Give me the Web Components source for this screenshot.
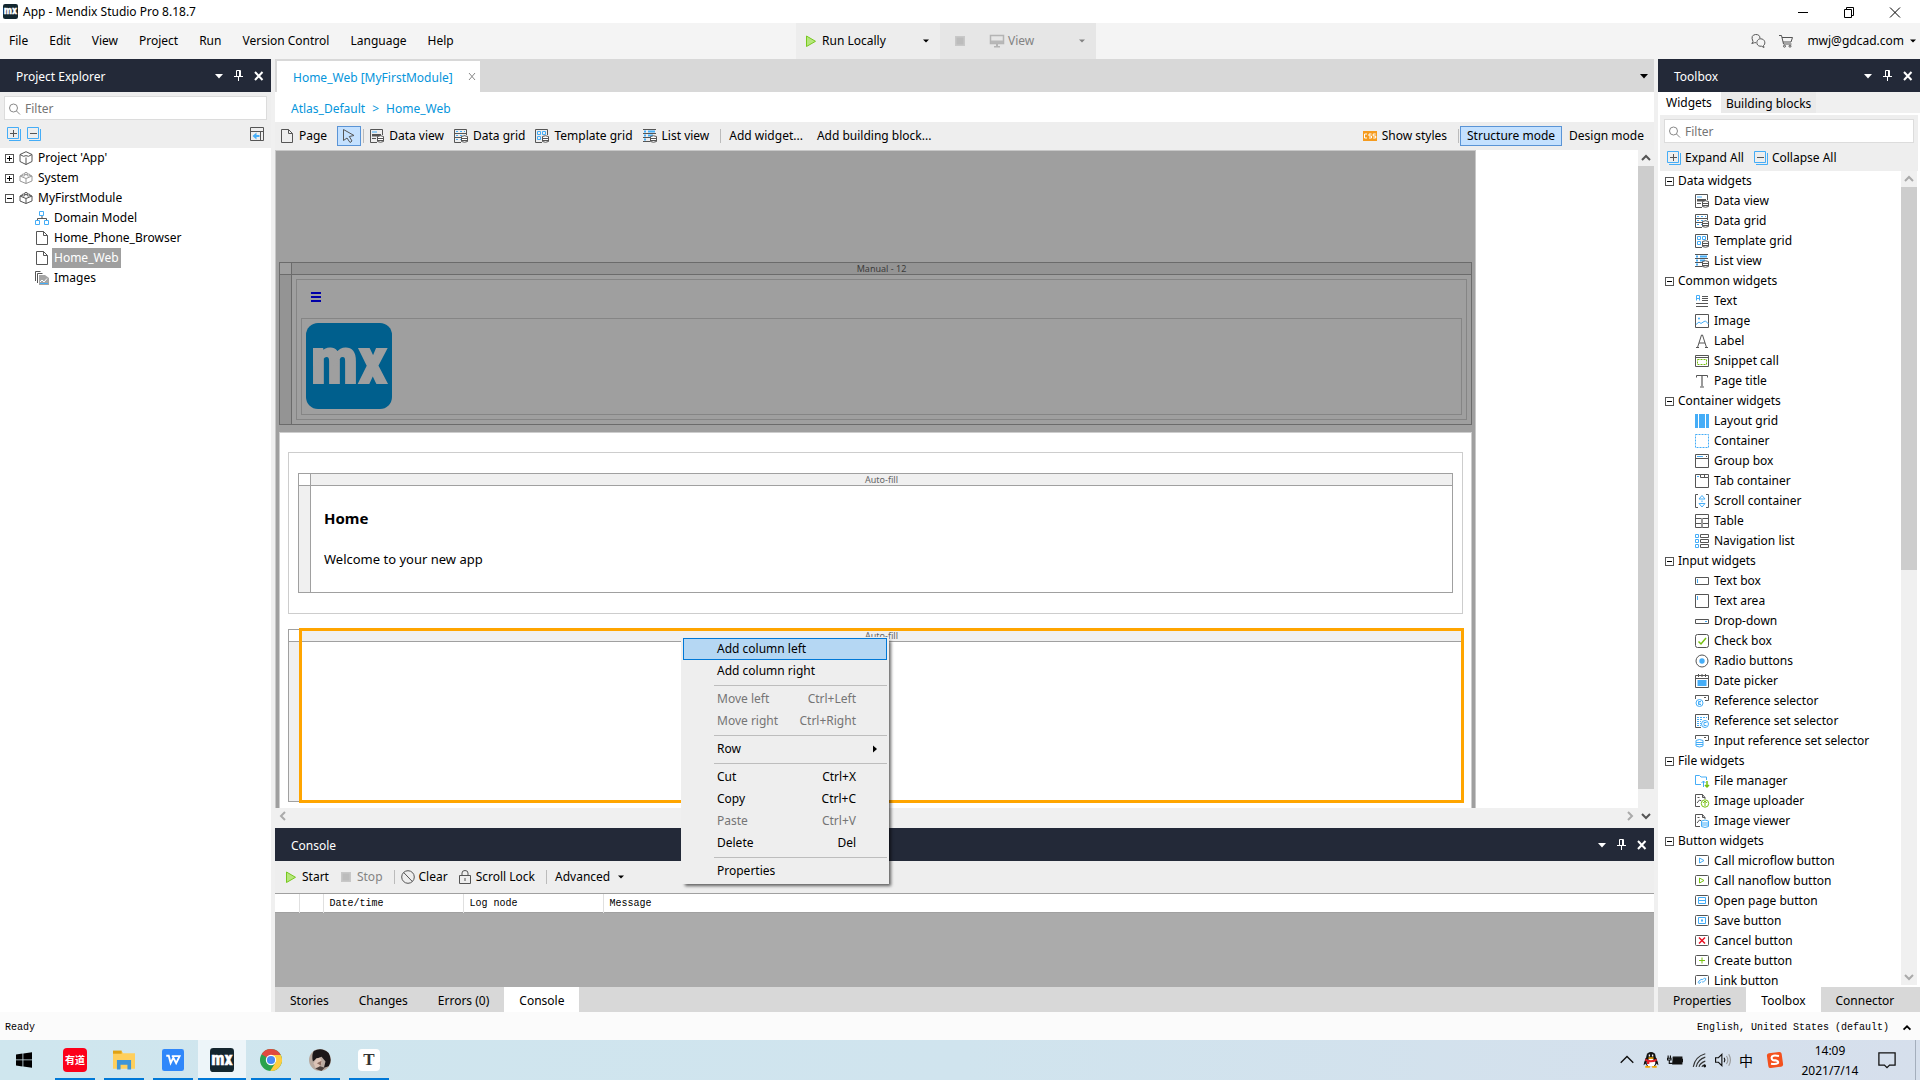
<!DOCTYPE html>
<html lang="en">
<head>
<meta charset="utf-8">
<title>App - Mendix Studio Pro 8.18.7</title>
<style>
    html, body { margin: 0; height: 100%; }
    body {
        font: 12px/20px "Noto Sans", "Noto Sans CJK SC", sans-serif;
        color: #000;
        background: #f0f0f0;
        overflow: hidden;
    }
</style>
</head>
<body>
<studio-app></studio-app>

<script>
// shared rules, every shadow root starts with these
const BASE = `
    *, *::before, *::after { box-sizing: border-box; }
    button { font: inherit; color: inherit; background: none; border: 0; padding: 0; margin: 0; white-space: nowrap; }
    input { font: inherit; }
    a { color: inherit; text-decoration: none; }
`;

const DB = '<path class="kw" d="M7.500 7.500q3-1.500 6 0v5q-3 1.500-6 0z"/><path class="k" d="M7.500 9.500h6M7.500 11.500h6"/>';
const REF = '<circle class="bw" cx="4.500" cy="9" r="3.500"/><path class="b" d="M6 7.500H3.500v3H6M3.500 9H5.500"/>';
const BTN = '<rect class="k" x=".5" y="1.500" width="13" height="10" rx="1"/>';

const ICONS = {
    play: '<path d="M2.500 2v10.500l9-5.200z" fill="#b5e67a" stroke="#76c81e"/>',
    stop: '<path d="M2 2h10v10H2z" fill="#c8c8c8"/><path d="M3.500 3.500h7v7h-7z" fill="#bcbcbc"/>',
    monitor: '<path d="M.5 1.500h13v8H.5z" fill="none" stroke="#b4b4b4" stroke-width="1.500"/><path d="M1 6.500h12v3H1z" fill="#b8b8b8"/><path d="M6 10h2v2h2v1.500H4V12h2z" fill="#b4b4b4"/>',
    chat: '<path class="k" d="M2 7.500Q-.8 1.200 4.500 .5q4.500-.2 4.500 4M2 7.500L.8 9.500 3.500 8.700h1.500M9.500 4.800c5 0 5.200 5.500 3 6.700l.5 2-2.500-1.300C4.500 13 4.500 5 9.500 4.800z"/>',
    cart: '<path class="k" d="M0 1.500h2.500L4.500 10h8M3 3.500h10.500L12 8H4"/><circle class="k" cx="5.500" cy="12.200" r="1"/><circle class="k" cx="11" cy="12.200" r="1"/>',
    search: '<circle cx="5.500" cy="6" r="4" fill="none" stroke="#888"/><path d="M8.500 9l3.500 3.500" stroke="#888"/>',
    expand: '<path class="b" d="M.5 .5h11v11H.5z"/><path class="b" d="M2 13.500h11.500V2"/><path class="k" d="M3 6.500h7M6.500 3v7"/>',
    collapse: '<path class="b" d="M.5 .5h11v11H.5z"/><path class="b" d="M2 13.500h11.500V2"/><path class="k" d="M3 6.500h7"/>',
    dock: '<path class="k" d="M.5 .5h13v13H.5zM.5 4.500h13M10.500 4.500v9"/><path d="M2.500 9l4-3.500v2.500h3v2h-3v2.500z" fill="#45adf7"/>',
    project: '<path class="k" d="M7 .7l6 2.800v7L7 13.500l-6-3v-7zM1 3.500l3.500 1.800Q7 4 9.500 5.300L13 3.500M7 6.500v7"/>',
    module: '<path class="k" d="M1 5l6-2.500L13 5v5L7 12.500 1 10zM1 5l6 2.500L13 5M7 7.500v5"/><ellipse class="kw" cx="4.500" cy="4" rx="1.500" ry="1"/><ellipse class="kw" cx="9.500" cy="4" rx="1.500" ry="1"/><ellipse class="kw" cx="7" cy="2.500" rx="1.500" ry="1"/>',
    domain: '<path class="k" d="M7 5v3M2.500 9V7.500h9V9"/><path class="bw" d="M4.500 .5h4v4h-4zM.5 9.500h4v4h-4zM9.500 9.500h4v4h-4z"/>',
    page: '<path class="k" d="M1.500 .5h7l4 4v9h-11zM8.500 .5v4h4"/>',
    images: '<path class="k" d="M.5 10V.5h5M2.500 12V2.500h5"/><path d="M4 4h6l4 3v7H4z" fill="#a5a5a5"/><path d="M5 11l2-2 2 2 3-3.500" fill="none" stroke="#fff"/><path d="M5 12.500h8" stroke="#45adf7"/>',
    cursor: '<path d="M1.500 .5v11l3.500-2.500 3 4.500 2-1.500-2.700-4.500 4.700-1z" fill="none" stroke="#555"/>',
    dataview: '<path class="k" d="M7 13.500H.5V.5h12V6"/><path class="b" d="M2 3h5"/><path class="kf" d="M2 5h9v2.500H2z"/><path class="k" d="M2 9.500h4"/>' + DB,
    datagrid: '<path class="k" d="M7 13.500H.5V.5h12V6M.5 4.500h12M.5 8.500H7"/><path class="b" stroke-dasharray="2 2" d="M2 2.500h9M2 6.500h9M2 10.500h5"/>' + DB,
    templategrid: '<path class="k" d="M7 13.500H.5V.5h12V6"/><path class="b" d="M2.500 2.500h3v3h-3zM7.500 2.500h3v3h-3zM2.500 7.500h3v3h-3z"/>' + DB,
    listview: '<path class="k" d="M0 .5h13M0 4.500h13M0 8.500h7M0 12.500h7"/><path class="b" stroke-width="2" d="M1 2.500h2M5 2.500h7M1 6.500h2M5 6.500h5M1 10.500h2"/>' + DB,
    css: '<path d="M0 2h14v10H0z" fill="#f59b1e"/><path d="M4 5H1.500v4H4M8.500 5H6v2h2.500v2H6M12.700 5h-2.500v2h2.500v2h-2.500" fill="none" stroke="#fff"/>',
    text: '<path class="b" d="M1.500 6.500v-5h3v5M1.500 4.500h3"/><path class="k" d="M7 2.500h6M7 4.500h6M7 6.500h6M1 9.500h12M1 12.500h12"/>',
    image: '<path class="k" d="M.5 .5h13v13H.5z"/><path class="b" d="M1 10.500l3-2.500 2 1.500 3-2 1.500-.5 3 3"/><circle cx="4" cy="4.500" r="1" fill="#45adf7"/>',
    label: '<path class="k" d="M2.500 13.500L6.500 1h1L11.500 13.500M4 9h6M1 13.500h3M10 13.500H13"/>',
    snippet: '<path class="k" d="M.5 1.500h13v11H.5zM.5 3.500h13"/><path class="g" stroke-dasharray="2 1" d="M2.500 5.500h9v5h-9z"/>',
    title: '<path class="k" d="M1.500 3.500v-2h11v2M5 13h4"/><path d="M7 2v11" stroke="#999" stroke-width="2"/>',
    layout: '<path class="bf" d="M0 0h3v14H0zM4 0h6v14H4zM11 0h3v14h-3z"/>',
    container: '<path class="b" stroke-dasharray="2 1" d="M.5 .5h13v13H.5z"/>',
    group: '<path class="k" d="M.5 .5h13v13H.5zM.5 4.500h13M11 2.500h1"/><path class="b" d="M2 2.500h6"/>',
    tabs: '<path class="k" d="M.5 .5h5v3h8v10H.5zM5.500 .5h8v3M9.500 .5v3"/><path class="b" d="M2 2.500h2"/>',
    scroll: '<path class="k" d="M3 .5H.5v13H3M11 .5h2.500v13H11"/><path class="b" d="M4 5l3-3.500L10 5zM4 9.500l3 3.500 3-3.500zM7 6.500v1.500"/>',
    table: '<path class="k" d="M.5 .5h13v13H.5zM.5 4.500h13M.5 9.500h13"/><path d="M7 4v9.500" stroke="#999" stroke-width="2"/>',
    navlist: '<path class="b" d="M.5 .5h3v3h-3zM.5 5.500h3v3h-3zM.5 10.500h3v3h-3z"/><path class="k" d="M5.500 .5h8v3h-8zM5.500 5.500h8v3h-8zM5.500 10.500h8v3h-8z"/>',
    textbox: '<path class="k" d="M.5 3.500h13v7H.5z"/><path class="b" d="M2.500 5v4"/>',
    textarea: '<path class="k" d="M.5 .5h13v13H.5z"/><path class="b" d="M2.500 2v4"/>',
    dropdown: '<path class="k" d="M.5 5.500h13v4H.5z"/><path class="b" d="M10 7.500h2"/>',
    check: '<rect class="k" x=".5" y=".5" width="13" height="13" rx="2"/><path class="g" stroke-width="1.500" d="M3.500 7.500L6 10l5-6"/>',
    radio: '<circle class="k" cx="7" cy="7" r="6"/><circle class="bf" cx="7" cy="7" r="2.700"/>',
    date: '<path class="k" d="M.5 1.500h13v12H.5zM.5 4.500h13M3.500 0v3M7 0v3M10.500 0v3"/><path class="bf" d="M2.500 6h9v6h-9z"/>',
    refsel: '<path class="k" d="M.5 5V1.500h13v5H10M9 3.500h2"/>' + REF,
    refset: '<path class="k" d="M6 13.500H.5V.5h13V6"/><path class="b" stroke-dasharray="2 1" d="M2 3.500h10M2 5.500h6M2 7.500h4M2 9.500h4M2 11.500h4"/><circle class="bw" cx="10" cy="10" r="3.500"/><path class="b" d="M11.500 8.500H9v3h2.500"/>',
    inputref: '<path class="k" d="M.5 5V1.500h13v5H10M9 3.500h2"/><path class="bw" d="M1 6.500q3.500-2 7 0v5.500q-3.500 2-7 0z"/><path class="b" d="M1 8.500h7M1 10.500h7"/>',
    file: '<path class="b" d="M6 10.500H.5v-9h4l1.500 1.500h5.500V6"/><path class="b" d="M8.500 13V7M6.500 9l2-2 2 2"/><path class="g" stroke-width="1.500" d="M12 7v6M10 11l2 2 2-2"/>',
    upload: '<path class="k" d="M5 12.500H.5V.5h7L10 3.500V5M7.500 .5v3H10M2.500 3.500h2M2 9l2.500-3 2 1"/><circle cx="10" cy="9.500" r="3.700" fill="#fff" stroke="#76c010"/><path class="g" d="M10 12V7.500M8.200 9l1.800-2 1.800 2"/>',
    viewer: '<path class="k" d="M5 12.500H.5V.5h7L10 3.500V5M7.500 .5v3H10M2.500 3.500h2M2 9l2.500-3 2 1"/><path class="bw" d="M6.500 7q3.500-2 7 0v5.500q-3.500 2-7 0z"/><path class="b" d="M6.500 9h7M6.500 11h7"/>',
    microflow: BTN + '<path class="b" d="M4.500 4v5l4.500-2.500z"/>',
    nanoflow: BTN + '<path class="g" d="M4.500 4v5l4.500-2.500z"/>',
    openpage: BTN + '<path class="b" d="M3.500 3.500h7v6h-7zM3.500 6.500h7"/>',
    save: BTN + '<path class="b" d="M3.500 3.500h7v6h-7z"/><path class="bf" d="M6 5.500h2v2H6z"/>',
    cancel: BTN + '<path d="M4 3.500l6 6M10 3.500l-6 6" stroke="#e81123" stroke-width="1.500"/>',
    create: BTN + '<path class="g" d="M7 3.500v6M4 6.500h6"/>',
    link: BTN + '<path class="b" d="M6 8l-2 1.500q-1.500-1 0-2.500L6 5.500q1.500-.5 2 .5M8 5.500l1.500-1.500q2 0 1 2L8.500 8q-1.500.5-1.500-.5"/>',
    clear: '<circle class="k" cx="7" cy="7" r="6.300"/><path class="k" d="M2.700 2.500l8.600 9"/>',
    lock: '<path class="k" d="M1.500 5.500h11v8h-11zM4 5.500V3q0-2.500 3-2.500t3 2.500v2.500M7 8v3"/>',
    down: '<path d="M3 5h8L7 9.500z" fill="currentColor"/>',
    caret: '<path d="M4 5.500h6L7 8.500z" fill="currentColor"/>',
    pin: '<path d="M4.500 7.500V1.500h4v6M2 7.500h9M6.500 8v4M7.500 2v5" fill="none" stroke="currentColor"/>',
    close: '<path d="M3 3l7.500 8M10.500 3L3 11" stroke="currentColor" stroke-width="2"/>',
    closesmall: '<path d="M4 3l6 7M10 3l-6 7" stroke="#888"/>',
    up: '<path d="M3 9l4-4 4 4" fill="none" stroke="currentColor" stroke-width="2"/>',
    downchev: '<path d="M3 5l4 4 4-4" fill="none" stroke="currentColor" stroke-width="2"/>',
    left: '<path d="M9 3L5 7l4 4" fill="none" stroke="currentColor" stroke-width="2"/>',
    right: '<path d="M5 3l4 4-4 4" fill="none" stroke="currentColor" stroke-width="2"/>',
    submenu: '<path d="M5 3.500v7L9 7z" fill="currentColor"/>',
    minimize: '<path d="M2 7.500h10" stroke="#000"/>',
    restore: '<path d="M2.500 4.500h7v8h-7zM4.500 4V2.500h7v8H10" fill="none" stroke="#000"/>',
    exit: '<path d="M2 2.500l10 10M12 2.500l-10 10" stroke="#000"/>',
    // taskbar
    windows: '<path d="M0 2.200l5.700-.8v5.200H0zM6.400 1.300L14 .3v6.300H6.400zM0 7.300h5.700v5.300L0 11.800zM6.400 7.300H14v6.400l-7.600-1z" fill="#000"/>',
    folder: '<path d="M0 1.500h5.500l1 1.200H14v9.800H0z" fill="#ffcf5c"/><path d="M0 1h5.500v2H0z" fill="#e0a214"/><path d="M2.500 7h9v6H9.200v-3H4.800v3H2.500z" fill="#3e95d8"/>',
    wps: '<rect width="14" height="14" rx="1.500" fill="#2f87fa"/><path d="M2.700 4.300h1.600L5.500 9l1.700-3.500L9 9l2.200-4.500H6.200" fill="none" stroke="#fff" stroke-width="1.200"/>',
    chrome: '<circle cx="7" cy="7" r="7" fill="#2ba24c"/><path d="M7 7L1 3.300A7 7 0 0 1 13.200 3.800H7z" fill="#e04a3f"/><path d="M7 3.800h6.200A7 7 0 0 1 6.500 14L10 8.500z" fill="#ffcd40"/><circle cx="7" cy="7" r="3.300" fill="#fff"/><circle cx="7" cy="7" r="2.600" fill="#4a8af4"/>',
    photo: '<circle cx="7" cy="7" r="7" fill="#b9aaa0"/><path d="M3 1.300Q8-1.500 12.500 2.500 15 7 12.500 11L9.500 12l1-4-2.500-3-3 1-2.500 2q-1-3.500.5-6.700z" fill="#1c1718"/><path d="M4.500 6l2.500-.5 1.500 3-2 3-2.500.5-1-3z" fill="#dcc3b6"/><path d="M5 9l3-1.500-.5 3z" fill="#8c6c60"/><path d="M4 12.500l3-1.500 3 1-2 2z" fill="#4a3f3c"/>',
    chevron: '<path d="M1.500 9.500L7 4l5.500 5.500" fill="none" stroke="#111" stroke-width="1.200"/>',
    qq: '<path d="M2.500 7Q0 9 .5 11.500L2.500 10M11.500 7Q14 9 13.500 11.500L11.500 10" fill="#111"/><ellipse cx="7" cy="8" rx="5.500" ry="5" fill="#111"/><ellipse cx="7" cy="3.700" rx="4" ry="3.700" fill="#111"/><ellipse cx="7" cy="9.500" rx="3.800" ry="3.500" fill="#fff"/><path d="M2 6q5 2.500 10 0v1.800q-5 2.500-10 0zM3.500 8h2v2.500h-2z" fill="#e6202a"/><path d="M5 3h1.200M7.800 3H9" stroke="#fff" stroke-width="1.800"/><path d="M4.800 5.300h4.400" stroke="#f5a800" stroke-width="1.400"/><path d="M2 13h4M8 13h4" stroke="#f5a800" stroke-width="1.700"/>',
    battery: '<path d="M5 4.500h8v6H4.500" fill="#111" stroke="#111"/><path d="M13.500 6v3M1 3v2M3 3v2M.5 5.500h3v1.500h-3zM2 7v3h3" stroke="#111" fill="none"/>',
    wifi: '<path d="M2 13Q3.500 4 12.500 1.500M4.500 13Q6 6.500 12.500 4.500M7 13Q8 9.500 12.500 8M9.500 13q.5-1.500 3-2" fill="none" stroke="#333"/><circle cx="12" cy="12.300" r="1.200" fill="#111"/>',
    speaker: '<path d="M.5 5h2.500l3-3v10L3 9H.5z" fill="none" stroke="#111"/><path d="M8 5q1.300 2 0 4" fill="none" stroke="#111"/><path d="M10 3.500q2.500 3.500 0 7M12 2q3 5 0 10" fill="none" stroke="#999"/>',
    sogou: '<rect x=".5" y=".5" width="13" height="13" rx="2" fill="#f4511e" transform="rotate(-8 7 7)"/><path d="M10.500 3.500Q4 2.200 4 5t3.500 2.200Q10.500 8 9.500 9.800 7.500 11 3.500 10.200" fill="none" stroke="#fff" stroke-width="1.800"/>',
    notify: '<path d="M.7 1.500h12.600v9.500H9L7 13l-2-2H.7z" fill="none" stroke="#111"/>'
};

function define(name, css, html) {
    customElements.define(name, class extends HTMLElement {
        constructor() {
            super();
            this.attachShadow({ mode: 'open' });
        }

        connectedCallback() {
            const markup = typeof html === 'function' ? html(this) : html;
            this.shadowRoot.innerHTML = `<style>${BASE}${css}</style>${markup}`;
        }
    });
}

define('app-icon', `
    :host { display: inline-block; flex: none; width: 14px; height: 14px; }
    svg { display: block; width: 100%; height: 100%; overflow: visible; }
    .k { stroke: #555; fill: none; }
    .kw { stroke: #555; fill: #fff; }
    .kf { fill: #555; }
    .b { stroke: #45adf7; fill: none; }
    .bw { stroke: #45adf7; fill: #fff; }
    .bf { fill: #45adf7; }
    .g { stroke: #76c010; fill: none; }
`, el => `<svg viewBox="0 0 14 14" aria-hidden="true">${ICONS[el.getAttribute('name')] || ''}</svg>`);

// the "mx" tile, size comes from the host
define('mx-logo', `
    :host { display: block; flex: none; width: 24px; height: 24px; --tile: #13262f; --ink: #fff; }
    svg { display: block; width: 100%; height: 100%; }
    rect { fill: var(--tile); }
    text { fill: var(--ink); stroke: var(--ink); stroke-width: 2px; font: bold 64px "Liberation Sans Narrow", "Roboto Condensed", sans-serif; }
`, `<svg viewBox="0 0 86 86" role="img" aria-label="Mendix"><rect width="86" height="86" rx="12"/><text x="43" y="60" text-anchor="middle">mx</text></svg>`);

define('tool-button', `
    :host { display: flex; flex: none; height: 20px; --gap: 4px; }
    button { display: flex; align-items: center; height: 100%; gap: var(--gap); border: 1px solid transparent; padding: 0 4px; }
    :host(:not([icon])) button { padding: 0 6px; }
    :host([active]) button { background: #c4e1ff; border-color: #5a94d6; }
    button:disabled { color: #838383; }
`, el => `<button type="button" ${el.hasAttribute('disabled') ? 'disabled' : ''} ${el.getAttribute('label') ? `aria-label="${el.getAttribute('label')}"` : ''}>
        ${el.getAttribute('icon') ? `<app-icon name="${el.getAttribute('icon')}"></app-icon>` : ''}${el.getAttribute('label') ? '' : '<slot></slot>'}
        ${el.hasAttribute('menu') ? '<app-icon name="caret"></app-icon>' : ''}
    </button>`);

define('tool-separator', `:host { display: block; flex: none; width: 1px; height: 14px; background: #bbb; margin: 0 1px 0 6px; }`, '');

define('title-bar', `
    :host { display: flex; align-items: center; height: 23px; background: #fff; padding: 0 18px 0 3px; gap: 5px; }
    mx-logo { width: 15px; height: 15px; }
    h1 { flex: 1; font: inherit; margin: 0; }
    .buttons { display: flex; gap: 32px; }
    button { display: flex; }
`, `<mx-logo></mx-logo><h1>App - Mendix Studio Pro 8.18.7</h1>
    <div class="buttons">
        <button type="button" aria-label="Minimize"><app-icon name="minimize"></app-icon></button>
        <button type="button" aria-label="Restore"><app-icon name="restore"></app-icon></button>
        <button type="button" aria-label="Close"><app-icon name="exit"></app-icon></button>
    </div>`);

define('menu-bar', `
    :host { display: grid; grid-template-columns: 796px auto 1fr; height: 36px; background: #f4f4f4; }
    nav, .group, .account { display: flex; align-items: center; }
    nav { gap: 21px; padding-left: 9px; }
    .group button { display: flex; align-items: center; gap: 4px; height: 36px; }
    .run { background: #ededed; width: 144px; padding: 0 7px 0 8px; }
    .view { background: #e6e6e6; width: 156px; padding: 0 7px 0 13px; color: #838383; gap: 23px; }
    .grow { flex: 1; }
    .account { justify-content: flex-end; gap: 14px; }
    .account button { display: flex; align-items: center; }
    .user app-icon { margin-left: 2px; }
`, `<nav>
        <button type="button">File</button><button type="button">Edit</button><button type="button">View</button>
        <button type="button">Project</button><button type="button">Run</button><button type="button">Version Control</button>
        <button type="button">Language</button><button type="button">Help</button>
    </nav>
    <div class="group">
        <div class="run group">
            <button type="button" class="grow"><app-icon name="play"></app-icon><span>Run Locally</span></button>
            <button type="button" aria-label="Run options"><app-icon name="caret"></app-icon></button>
        </div>
        <div class="view group">
            <button type="button" aria-label="Stop" disabled><app-icon name="stop"></app-icon></button>
            <button type="button" class="grow" disabled><app-icon name="monitor"></app-icon><span>View</span></button>
            <button type="button" aria-label="View options" disabled><app-icon name="caret"></app-icon></button>
        </div>
    </div>
    <div class="account">
        <button type="button" aria-label="Feedback"><app-icon name="chat"></app-icon></button>
        <button type="button" aria-label="Marketplace"><app-icon name="cart"></app-icon></button>
        <button type="button" class="user">mwj@gdcad.com<app-icon name="caret"></app-icon></button>
    </div>`);

define('panel-header', `
    :host { display: flex; align-items: center; height: 33px; flex: none; background: #232938; color: #fff; padding: 0 5px 0 16px; gap: 6px; }
    h2 { flex: 1; font: inherit; margin: 0; padding-top: 2px; }
    button { display: flex; }
`, `<h2><slot></slot></h2>
    <button type="button" aria-label="Window menu"><app-icon name="down"></app-icon></button>
    <button type="button" aria-label="Pin"><app-icon name="pin"></app-icon></button>
    <button type="button" aria-label="Close panel"><app-icon name="close"></app-icon></button>`);

define('filter-box', `
    :host { display: block; margin: 4px 4px 0; }
    label { display: flex; align-items: center; gap: 3px; height: 24px; background: #fff; border: 1px solid #dcdcdc; padding: 1px 3px 0; }
    input { flex: 1; min-width: 0; border: 0; outline: 0; padding: 0; background: none; }
    input::placeholder { color: #757575; opacity: 1; }
`, `<label><app-icon name="search"></app-icon><input type="text" placeholder="Filter" aria-label="Filter"></label>`);

define('tree-node', `
    :host { display: flex; align-items: center; flex: none; height: 20px; padding-left: 5px; white-space: nowrap; }
    :host([child]) { padding-left: 32px; }
    .box { flex: none; width: 9px; height: 9px; border: 1px solid #555; margin-right: 2px;
        background: linear-gradient(#000, #000) center / 5px 1px no-repeat; }
    .box.plus { background: linear-gradient(#000, #000) center / 5px 1px no-repeat, linear-gradient(#000, #000) center / 1px 5px no-repeat; }
    app-icon { margin: 0 3px; }
    :host([faded]) app-icon { opacity: .6; }
    .label { padding: 0 2px; }
    :host([selected]) .label { background: #9f9f9f; color: #fff; }
`, el => `${el.hasAttribute('child') ? '' : `<button type="button" class="box ${el.hasAttribute('collapsed') ? 'plus' : ''}" aria-label="Toggle"></button>`}
    ${el.getAttribute('icon') ? `<app-icon name="${el.getAttribute('icon')}"></app-icon>` : ''}<span class="label"><slot></slot></span>`);

define('scroll-bar', `
    :host { display: flex; flex-direction: column; flex: none; width: 16px; background: #f0f0f0; color: #555; --thumb: 97%; }
    :host([horizontal]) { flex-direction: row; width: auto; height: 16px; }
    :host([muted]) { color: #aaa; }
    button { display: flex; align-items: center; justify-content: center; width: 16px; height: 16px; flex: none; }
    .track { flex: 1; }
    .thumb { background: #cdcdcd; height: var(--thumb); }
    :host([horizontal]) .thumb { display: none; }
`, el => {
    const [a, b] = el.hasAttribute('horizontal') ? ['left', 'right'] : ['up', 'downchev'];
    return `<button type="button" aria-label="Scroll back"><app-icon name="${a}"></app-icon></button>
        <div class="track"><div class="thumb"></div></div>
        <button type="button" aria-label="Scroll forward"><app-icon name="${b}"></app-icon></button>`;
});

define('dock-tabs', `
    :host { display: flex; flex: none; height: 25px; background: #d8d8d8; }
    button { height: 100%; padding: 2px 15px 0; }
    button.active { background: #fff; }
`, el => el.getAttribute('tabs').split(',').map(t =>
    `<button type="button" class="${t === el.getAttribute('current') ? 'active' : ''}">${t}</button>`).join(''));

define('project-explorer', `
    :host { display: flex; flex-direction: column; background: #fff; }
    .tools { display: flow-root; background: #eee; }
    .row { display: flex; justify-content: space-between; align-items: center; height: 28px; padding: 0 7px; }
    .row div { display: flex; gap: 6px; }
    .row button { display: flex; }
    .tree { display: flex; flex-direction: column; }
`, `<panel-header>Project Explorer</panel-header>
    <div class="tools">
        <filter-box></filter-box>
        <div class="row">
            <div>
                <button type="button" aria-label="Expand all"><app-icon name="expand"></app-icon></button>
                <button type="button" aria-label="Collapse all"><app-icon name="collapse"></app-icon></button>
            </div>
            <button type="button" aria-label="Select in explorer"><app-icon name="dock"></app-icon></button>
        </div>
    </div>
    <div class="tree">
        <tree-node collapsed icon="project">Project 'App'</tree-node>
        <tree-node collapsed icon="module" faded>System</tree-node>
        <tree-node icon="module">MyFirstModule</tree-node>
        <tree-node child icon="domain">Domain Model</tree-node>
        <tree-node child icon="page">Home_Phone_Browser</tree-node>
        <tree-node child icon="page" selected>Home_Web</tree-node>
        <tree-node child icon="images">Images</tree-node>
    </div>`);

const WIDGETS = {
    'Data widgets': { 'Data view': 'dataview', 'Data grid': 'datagrid', 'Template grid': 'templategrid', 'List view': 'listview' },
    'Common widgets': { 'Text': 'text', 'Image': 'image', 'Label': 'label', 'Snippet call': 'snippet', 'Page title': 'title' },
    'Container widgets': { 'Layout grid': 'layout', 'Container': 'container', 'Group box': 'group', 'Tab container': 'tabs',
        'Scroll container': 'scroll', 'Table': 'table', 'Navigation list': 'navlist' },
    'Input widgets': { 'Text box': 'textbox', 'Text area': 'textarea', 'Drop-down': 'dropdown', 'Check box': 'check', 'Radio buttons': 'radio',
        'Date picker': 'date', 'Reference selector': 'refsel', 'Reference set selector': 'refset', 'Input reference set selector': 'inputref' },
    'File widgets': { 'File manager': 'file', 'Image uploader': 'upload', 'Image viewer': 'viewer' },
    'Button widgets': { 'Call microflow button': 'microflow', 'Call nanoflow button': 'nanoflow', 'Open page button': 'openpage',
        'Save button': 'save', 'Cancel button': 'cancel', 'Create button': 'create', 'Link button': 'link' }
};

define('toolbox-panel', `
    :host { display: flex; flex-direction: column; background: #fff; min-height: 0; }
    .tabs { display: flex; height: 21px; background: #f0f0f0; }
    .tabs button { padding: 2px 5px 0; background: #eaeaea; }
    .tabs button.active { padding: 0 9px 0 8px; background: #fff; }
    .tools { display: flow-root; background: #eee; margin: 2px 2px 0; }
    .row { display: flex; align-items: center; height: 28px; padding: 1px 0 0 2px; }
    .list { flex: 1; min-height: 0; display: flex; margin: 0 3px 2px 2px; }
    .tree { flex: 1; overflow: hidden; display: flex; flex-direction: column; }
    scroll-bar { --thumb: 49%; }
`, `<panel-header>Toolbox</panel-header>
    <div class="tabs"><button type="button" class="active">Widgets</button><button type="button">Building blocks</button></div>
    <div class="tools">
        <filter-box></filter-box>
        <div class="row"><tool-button icon="expand">Expand All</tool-button><tool-button icon="collapse">Collapse All</tool-button></div>
    </div>
    <div class="list"><div class="tree">${Object.entries(WIDGETS).map(([group, items]) =>
        `<tree-node>${group}</tree-node>` + Object.entries(items).map(([label, icon]) => `<tree-node child icon="${icon}">${label}</tree-node>`).join('')
    ).join('')}</div><scroll-bar muted></scroll-bar></div>
    <dock-tabs tabs="Properties,Toolbox,Connector" current="Toolbox"></dock-tabs>`);

// one row, one column layout grid as the page editor draws it
define('layout-grid', `
    :host { display: grid; grid-template: 11px auto / 11px 1fr; position: relative; border: 1px solid var(--line);
        --line: #a0a0a0; --head: #f0f0f0; --caption: #666; }
    .head { background: var(--head); border-left: 1px solid var(--line); color: var(--caption); font-size: 9px; line-height: 11px; text-align: center; }
    .side { background: var(--head); border-top: 1px solid var(--line); }
    .cell { border: solid var(--line); border-width: 1px 0 0 1px; }
    .frame { position: absolute; inset: -2px -2px -2px 10px; border: 3px solid orange; }
`, el => `<div></div><div class="head">${el.getAttribute('caption')}</div><div class="side"></div>
    <div class="cell"><slot></slot></div>${el.hasAttribute('selected') ? '<div class="frame"></div>' : ''}`);

define('page-editor', `
    :host { display: flex; flex-direction: column; min-height: 0; background: #fff; }
    .tabs { display: flex; justify-content: space-between; align-items: flex-end; height: 33px; flex: none; background: #d8d8d8; padding: 0 3px 0 2px; }
    .tab { display: flex; align-items: center; gap: 12px; height: 31px; padding: 0 1px 0 16px; background: #fff; color: #0595db; }
    .tab span { padding-top: 2px; }
    .tab button, .tabs > button { display: flex; }
    .tabs > button { align-self: center; }
    .crumbs { display: flex; align-items: center; gap: 7px; height: 30px; flex: none; padding: 3px 0 0 16px; color: #0595db; }
    .toolbar { display: flex; align-items: center; height: 28px; flex: none; background: #eee; padding: 0 3px 0 0; }
    .toolbar tool-button { --gap: 5px; }
    .toolbar tool-button[label] { margin: 0 -4px 0 -3px; }
    .spacer { flex: 1; }
    .body { flex: 1; min-height: 0; display: flex; }
    .main { flex: 1; min-width: 0; display: flex; flex-direction: column; }
    .canvas { flex: 1; min-height: 0; overflow: hidden; padding-right: 162px; }
    .page { background: #9f9f9f; border: 1px solid #c8c8c8; padding: 111px 3px 0; }
    .master { --line: #6b6b6b; --head: #949494; --caption: #3c3c3c; margin-bottom: 7px; }
    .region { border: 1px solid #858585; margin: 4px; padding: 0 4px 4px; }
    .menu { display: flex; align-items: center; height: 38px; padding: 0 10px 4px; }
    .bars { width: 10px; height: 10px; padding: 0; background: repeating-linear-gradient(#0000a8 0 2px, transparent 2px 4px); }
    .brand { border: 1px solid #858585; padding: 4px 4px 5px; }
    mx-logo { width: 86px; height: 86px; --tile: #005f8d; --ink: #9f9f9f; }
    .content { background: #fff; border: 1px solid #cdcdcd; padding: 19px 8px 40px; }
    .box { border: 1px solid #cdcdcd; padding: 20px 9px; margin-bottom: 15px; }
    .text { padding: 22px 13px 23px; }
    h3 { font-size: 15px; line-height: 20px; margin: 0 0 21px; }
    p { font-size: 13px; margin: 0; }
    .empty { height: 159px; }
`, `<div class="tabs">
        <div class="tab"><span>Home_Web [MyFirstModule]</span><button type="button" aria-label="Close tab"><app-icon name="closesmall"></app-icon></button></div>
        <button type="button" aria-label="Open documents"><app-icon name="down"></app-icon></button>
    </div>
    <div class="crumbs"><a href="#atlas">Atlas_Default</a><span>&gt;</span><a href="#home">Home_Web</a></div>
    <div class="toolbar">
        <tool-button icon="page">Page</tool-button><tool-separator></tool-separator>
        <tool-button icon="cursor" label="Select" active></tool-button><tool-separator></tool-separator>
        <tool-button icon="dataview">Data view</tool-button>
        <tool-button icon="datagrid">Data grid</tool-button>
        <tool-button icon="templategrid">Template grid</tool-button>
        <tool-button icon="listview">List view</tool-button><tool-separator></tool-separator>
        <tool-button>Add widget...</tool-button>
        <tool-button>Add building block...</tool-button>
        <span class="spacer"></span>
        <tool-button icon="css">Show styles</tool-button><tool-separator></tool-separator>
        <tool-button active>Structure mode</tool-button>
        <tool-button>Design mode</tool-button>
    </div>
    <div class="body">
        <div class="main">
            <div class="canvas"><div class="page">
                <layout-grid class="master" caption="Manual - 12">
                    <div class="region">
                        <div class="menu"><button type="button" class="bars" aria-label="Toggle menu"></button></div>
                        <div class="brand"><mx-logo></mx-logo></div>
                    </div>
                </layout-grid>
                <div class="content">
                    <div class="box">
                        <layout-grid caption="Auto-fill"><div class="text"><h3>Home</h3><p>Welcome to your new app</p></div></layout-grid>
                    </div>
                    <layout-grid caption="Auto-fill" selected><div class="empty"></div></layout-grid>
                </div>
            </div></div>
            <scroll-bar horizontal muted></scroll-bar>
        </div>
        <scroll-bar></scroll-bar>
    </div>`);

define('console-panel', `
    :host { display: flex; flex-direction: column; margin-top: 4px; }
    .toolbar { display: flex; align-items: center; height: 32px; background: #eee; padding-left: 4px; }
    .log { height: 94px; background: #ababab; border-top: 1px solid #a0a0a0; }
    table { width: 100%; border-collapse: collapse; table-layout: fixed; background: #fff; border-bottom: 1px solid #a0a0a0; }
    th { font: 10px/16px "Liberation Mono", monospace; text-align: left; padding: 2px 6px 0; border-right: 1px solid #e0e0e0; }
    th:last-child { border: 0; }
`, `<panel-header>Console</panel-header>
    <div class="toolbar">
        <tool-button icon="play">Start</tool-button>
        <tool-button icon="stop" disabled>Stop</tool-button><tool-separator></tool-separator>
        <tool-button icon="clear">Clear</tool-button>
        <tool-button icon="lock">Scroll Lock</tool-button><tool-separator></tool-separator>
        <tool-button menu>Advanced</tool-button>
    </div>
    <div class="log"><table>
        <colgroup><col style="width: 24px"><col style="width: 24px"><col style="width: 140px"><col style="width: 140px"><col></colgroup>
        <thead><tr><th></th><th></th><th>Date/time</th><th>Log node</th><th>Message</th></tr></thead>
    </table></div>
    <dock-tabs tabs="Stories,Changes,Errors (0),Console" current="Console"></dock-tabs>`);

define('menu-item', `
    :host { display: block; }
    button { display: flex; align-items: center; justify-content: space-between; width: 100%; height: 22px; padding: 0 30px 0 33px; border: 1px solid transparent; }
    :host([active]) button { background: #b5d7f3; border-color: #0078d7; }
    button:disabled { color: #757575; }
    app-icon { margin-right: -26px; }
`, el => `<button type="button" role="menuitem" ${el.hasAttribute('disabled') ? 'disabled' : ''}><span><slot></slot></span>
    ${el.hasAttribute('submenu') ? '<app-icon name="submenu"></app-icon>' : `<span>${el.getAttribute('keys') || ''}</span>`}</button>`);

define('context-menu', `
    :host { position: absolute; left: 681px; top: 637px; width: 208px; padding: 1px 2px 2px; background: #eee; box-shadow: 3px 3px 3px -1px rgba(0, 0, 0, .6); }
    hr { height: 1px; border: 0; background: #bdbdbd; margin: 3px 0 2px 31px; }
`, `<menu-item active>Add column left</menu-item>
    <menu-item>Add column right</menu-item><hr>
    <menu-item disabled keys="Ctrl+Left">Move left</menu-item>
    <menu-item disabled keys="Ctrl+Right">Move right</menu-item><hr>
    <menu-item submenu>Row</menu-item><hr>
    <menu-item keys="Ctrl+X">Cut</menu-item>
    <menu-item keys="Ctrl+C">Copy</menu-item>
    <menu-item disabled keys="Ctrl+V">Paste</menu-item>
    <menu-item keys="Del">Delete</menu-item><hr>
    <menu-item>Properties</menu-item>`);

define('status-bar', `
    :host { display: flex; justify-content: space-between; align-items: center; height: 28px; background: #fbfbfb; padding: 3px 7px 0 5px;
        font: 10px/20px "Liberation Mono", monospace; }
    button { display: flex; align-items: center; gap: 12px; }
    app-icon { width: 12px; height: 12px; }
`, `<span>Ready</span><button type="button">English, United States (default)<app-icon name="up"></app-icon></button>`);

define('task-item', `
    :host { display: block; width: 48px; height: 40px; padding: 0 4px; }
    :host([active]) { background: #edf5f9; padding: 0; }
    button { display: flex; align-items: center; justify-content: center; width: 100%; height: 100%; border-bottom: 2px solid #0078d7; padding-top: 2px; }
    :host([plain]) button { border-color: transparent; }
`, el => `<button type="button" aria-label="${el.getAttribute('label')}"><slot></slot></button>`);

define('task-bar', `
    :host { display: flex; justify-content: space-between; height: 40px; background: linear-gradient(90deg, #cfe6ee, #d0e4ee 50%, #d6dfec); }
    .apps, .tray { display: flex; align-items: center; }
    .apps { gap: 1px; }
    .apps app-icon { width: 22px; height: 22px; }
    .apps task-item[plain] { margin-right: 2px; }
    .apps [name=windows] { width: 16px; height: 16px; }
    .tile { display: grid; place-items: center; width: 24px; height: 24px; border-radius: 4px; background: #fc0019; color: #fff;
        font: bold 10px/24px "Noto Sans CJK SC", sans-serif; }
    .typora { width: 22px; height: 22px; background: #fff; color: #333; font: bold 17px/22px "Liberation Serif", serif; }
    .tray { gap: 8px; }
    .tray app-icon { width: 16px; height: 16px; }
    .tray [name=notify] { width: 18px; height: 18px; }
    .ime { width: 14px; margin-right: 6px; font: 14px/16px "Noto Sans CJK SC", sans-serif; }
    time { text-align: center; margin: 0 10px 0 9px; padding-top: 1px; width: 60px; white-space: nowrap; }
    .show { width: 5px; height: 40px; border-left: 1px solid #a4aebc; margin-left: 11px; }
`, `<div class="apps">
        <task-item plain label="Start"><app-icon name="windows"></app-icon></task-item>
        <task-item label="Youdao"><span class="tile">有道</span></task-item>
        <task-item label="File Explorer"><app-icon name="folder"></app-icon></task-item>
        <task-item label="WPS"><app-icon name="wps"></app-icon></task-item>
        <task-item label="Mendix Studio Pro" active><mx-logo></mx-logo></task-item>
        <task-item label="Chrome"><app-icon name="chrome"></app-icon></task-item>
        <task-item label="Profile"><app-icon name="photo"></app-icon></task-item>
        <task-item label="Typora"><span class="tile typora">T</span></task-item>
    </div>
    <div class="tray">
        <app-icon name="chevron"></app-icon><app-icon name="qq"></app-icon><app-icon name="battery"></app-icon>
        <app-icon name="wifi"></app-icon><app-icon name="speaker"></app-icon><span class="ime">中</span>
        <app-icon name="sogou"></app-icon><time>14:09<br>2021/7/14</time><app-icon name="notify"></app-icon><span class="show"></span>
    </div>`);

define('studio-app', `
    :host { display: grid; grid-template: auto auto minmax(0, 1fr) auto auto / minmax(0, 1fr); height: 100vh; position: relative; }
    .work { display: grid; grid-template-columns: 271px minmax(0, 1fr) 262px; gap: 4px; min-height: 0; }
    .centre { display: flex; flex-direction: column; min-height: 0; }
    page-editor { flex: 1; }
`, `<title-bar></title-bar>
    <menu-bar></menu-bar>
    <div class="work">
        <project-explorer></project-explorer>
        <div class="centre"><page-editor></page-editor><console-panel></console-panel></div>
        <toolbox-panel></toolbox-panel>
    </div>
    <status-bar></status-bar>
    <task-bar></task-bar>
    <context-menu></context-menu>`);
</script>
</body>
</html>
